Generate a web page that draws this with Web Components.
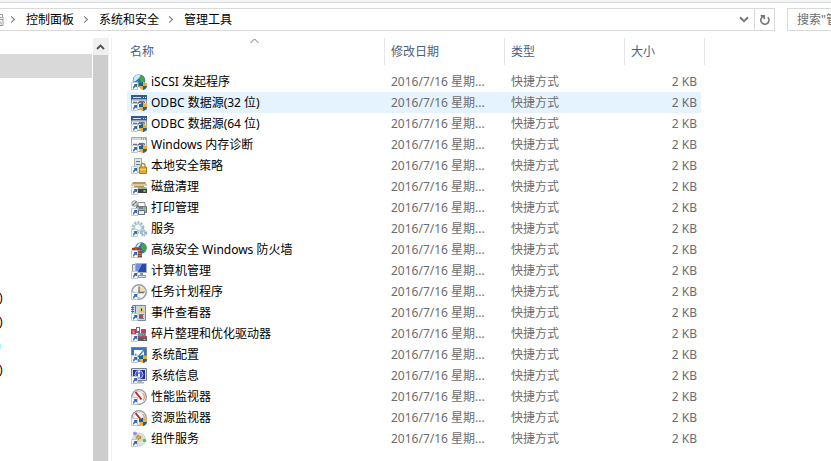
<!DOCTYPE html>
<html lang="zh-CN">
<head>
<meta charset="utf-8">
<title>管理工具</title>
<style>
  body {
    margin: 0;
    background: #fff;
    color: #000;
    font: 12px/20px "Noto Sans", "Noto Sans CJK SC", sans-serif;
  }
</style>
</head>
<body>
<explorer-window>
  <address-bar slot="toolbar">
    <a href="#panel">控制面板</a>
    <a href="#security">系统和安全</a>
    <a href="#tools">管理工具</a>
  </address-bar>
  <search-box slot="toolbar" label="搜索&quot;管理工具&quot;"></search-box>
  <nav-pane slot="nav"></nav-pane>
  <file-list></file-list>
</explorer-window>

<script>
class ExplorerWindow extends HTMLElement {
  constructor() {
    super();
    this.attachShadow({ mode: "open" });
    this.shadowRoot.innerHTML = `
    <style>
        :host {
            display: flex;
            flex-direction: column;
            height: 100vh;
            overflow: hidden;
        }
        #ribbon {
            flex: none;
            height: 2px;
            background: #f5f6f7;
            border-bottom: 1px solid #dadbdc;
        }
        header {
            flex: none;
            display: flex;
            gap: 12px;
            padding: 5px 0 7px;
        }
        main {
            flex: 1;
            display: flex;
            min-height: 0;
        }
    </style>
    <div id="ribbon"></div>
    <header><slot name="toolbar"></slot></header>
    <main>
        <slot name="nav"></slot>
        <slot></slot>
    </main>
    `;
  }
}

class AddressBar extends HTMLElement {
  constructor() {
    super();
    this.attachShadow({ mode: "open" });
    this.shadowRoot.innerHTML = `
    <style>
        :host {
            flex: 1;
            display: flex;
            align-items: center;
            box-sizing: border-box;
            height: 23px;
            border: 1px solid #d9d9d9;
            border-left: 0;
        }
        nav {
            flex: 1;
            display: flex;
            align-items: center;
            gap: 3px;
        }
        svg { display: block; flex: none; }
        ::slotted(a) {
            display: flex;
            align-items: center;
            color: #000;
            text-decoration: none;
        }
        ::slotted(a)::before {
            content: "";
            box-sizing: border-box;
            width: 5px;
            height: 5px;
            margin: 0 12px 0 5px;
            border: solid #777;
            border-width: 1px 1px 0 0;
            transform: rotate(45deg);
        }
        button {
            display: grid;
            place-items: center;
            width: 20px;
            height: 21px;
            padding: 0;
            border: 0;
            background: none;
        }
        #refresh { border-left: 1px solid #d9d9d9; }
    </style>
    <svg width="4" height="14" viewBox="0 0 4 14" fill="none" stroke="#999">
        <path d="M0 1.500H2.500V4M0 4.500H2M0 6.500H3M3 4V12.500H0M1 8.500v3"/>
    </svg>
    <nav><slot></slot></nav>
    <button aria-label="展开">
        <svg width="10" height="7" viewBox="0 0 10 7"><path d="M1 1.200l4 4 4-4" fill="none" stroke="#777" stroke-width="2"/></svg>
    </button>
    <button id="refresh" aria-label="刷新">
        <svg width="12" height="12" viewBox="0 0 12 12">
            <path d="M8.800 3.200a4.100 4.100 0 1 1-4.400-.9M1.600 1.700h3.600v3.600" fill="none" stroke="#777" stroke-width="1.600"/>
        </svg>
    </button>
    `;
  }
}

class SearchBox extends HTMLElement {
  constructor() {
    super();
    this.attachShadow({ mode: "open" });
    this.shadowRoot.innerHTML = `
    <style>
        :host { flex: 0 0 44px; }
        input {
            box-sizing: border-box;
            display: block;
            width: 100%;
            height: 23px;
            margin: 0;
            padding: 0 0 0 9px;
            border: 1px solid #d9d9d9;
            border-right: 0;
            background: #fff;
            font: inherit;
        }
        input::placeholder { color: #6d6d6d; }
    </style>
    <input type="text">
    `;
  }

  connectedCallback() {
    const input = this.shadowRoot.querySelector("input");
    input.placeholder = this.getAttribute("label");
    input.setAttribute("aria-label", this.getAttribute("label"));
  }
}

class NavPane extends HTMLElement {
  constructor() {
    super();
    this.attachShadow({ mode: "open" });
    this.shadowRoot.innerHTML = `
    <style>
        :host {
            flex: none;
            display: flex;
            gap: 1px;
            width: 111px;
            border-right: 1px solid #f0f0f0;
        }
        #tree {
            width: 92px;
            padding-top: 16px;
            overflow: hidden;
        }
        #current {
            display: block;
            height: 24px;
            margin-bottom: 208px;
            background: #d9d9d9;
        }
        #drives {
            display: grid;
            grid-auto-rows: 24px;
            align-items: center;
            margin-left: -1px;
        }
        #drives a {
            color: #000;
            text-decoration: none;
        }
        #drives i {
            width: 2px;
            height: 5px;
            background: #a8f4ff;
        }
        #scroll {
            display: flex;
            flex-direction: column;
            width: 15px;
            border-right: 1px solid #f0f0f0;
            background: #f0f0f0;
        }
        #scroll button {
            height: 17px;
            padding: 0;
            border: 0;
            background: #f0f0f0;
        }
        #scroll svg { display: block; margin: auto; }
        #thumb { flex: 1; background: #cdcdcd; }
    </style>
    <div id="tree">
        <a id="current" href="#current" aria-label="当前文件夹"></a>
        <div id="drives">
            <a href="#c">)</a>
            <a href="#d">)</a>
            <i></i>
            <a href="#e">)</a>
        </div>
    </div>
    <div id="scroll">
        <button aria-label="向上滚动">
            <svg width="9" height="6" viewBox="0 0 9 6"><path d="M1 5l3.500-3.500L8 5" fill="none" stroke="#505050" stroke-width="1.800"/></svg>
        </button>
        <div id="thumb"></div>
    </div>
    `;
  }
}

const SHIELD = `
  <path d="M12 7.500q2 1.500 4 1.500v3q-.5 3-4 4-3.500-1-4-4V9q2 0 4-1.500z" fill="#f3ac2c"/>
  <path d="M12 7.500V12H8V9q2 0 4-1.500zM12 12h4q-.5 3-4 4z" fill="#1b5f9f"/>`;

const GLOBE = `
  <circle cx="8" cy="6.500" r="6.300" fill="#2873c4"/>
  <path d="M3 3q3-3.500 7-2.500L9 3 7 5 4.500 7 2 8z" fill="#cfeaf2"/>
  <path d="M9 1.500l3 1 2 3-1 4-2-1-2.500-3z" fill="#45a83b"/>
  <path d="M3 8l4-1 2 4-2 1.500z" fill="#58b550"/>`;

const WINDOW = `
  <path d="M.5.500h15v14H.5z" fill="#f4f6f8" stroke="#8d99a4"/>
  <path d="M0 0h16v4.500H0z" fill="#345a8a"/>
  <path d="M2 2.500h8M12 2.500h1M14 2.500h1" stroke="#d7e3ef"/>
  <path d="M1 5.500h14" stroke="#c3ccd4"/>`;

const TOOLS = `
  <path d="M2 7.500h4M9 7.500q2-2 5 0M6 9l3-2.500 4 3" fill="none" stroke="#68737d" stroke-width="1.600"/>`;

const GAUGE = `
  <circle cx="8" cy="8" r="7.300" fill="#fbfbfb" stroke="#8f9699" stroke-width="1.300"/>
  <path d="M3 9a5 5 0 0 1 8-5.500" fill="none" stroke="#c7cdd1"/>
  <path d="M11.500 4a5.300 5.300 0 0 1 .5 7.500" fill="none" stroke="#e9a184" stroke-width="1.500"/>
  <path d="M4.500 3l6 7.500" stroke="#c52722" stroke-width="2"/>`;

const SERVER = `
  <path d="M3.500.500h7v14h-7z" fill="#dfe4e7" stroke="#a2abb1"/>
  <path d="M5 3.500h4M5 6.500h4" stroke="#637784"/>`;

const ICONS = {
  iscsi: GLOBE + SHIELD,
  odbc: WINDOW + TOOLS + SHIELD,
  memory: `
    <path d="M.5.500h15v14H.5z" fill="#fafafa" stroke="#a4aaaf"/>
    <path d="M1 2h14" stroke="#d3d7da" stroke-width="2"/>
    <path d="M10 2h1M12 2h1M14 2h1" stroke="#727a81"/>` + TOOLS + SHIELD,
  policy: SERVER + `
    <path d="M10 9V7.500a2 2 0 0 1 4 0V9" fill="none" stroke="#a98b35" stroke-width="1.300"/>
    <path d="M8.500 9h7v6.500h-7z" fill="#e6ad2d" stroke="#b07e18"/>
    <path d="M9 11.500h6" stroke="#fbd46c"/>`,
  disk: `
    <path d="M2 3h12l2 3H0z" fill="#b49b5d"/>
    <path d="M0 5h16v2H0z" fill="#dccb98"/>
    <path d="M3 7.500h10" stroke="#a8935a"/>
    <path d="M6 9l1-1h8l1 1v1H6z" fill="#a4a8a9"/>
    <path d="M6 10h10v4H6z" fill="#3b4041"/>
    <path d="M12.500 12h2" stroke="#67e03f" stroke-width="2"/>`,
  print: `
    <path d="M7 2.500h7v5H7z" fill="#fafafa" stroke="#8a8f92"/>
    <path d="M5.500 6.500h10v6h-10z" fill="#a9afb3" stroke="#6d757a"/>
    <path d="M7.500 10.500h6v4h-6z" fill="#e6f0f5" stroke="#687278"/>
    <path d="M8 8h4" stroke="#555d61"/>
    <path d="M13 8h2" stroke="#53c653"/>
    <circle cx="3.500" cy="3.500" r="2.700" fill="#eee" stroke="#888e91"/>
    <path d="M1.500 5.500l4-4M6 5l3 3" stroke="#777e82" stroke-width="1.300"/>`,
  services: `
    <circle cx="7" cy="6.500" r="5" fill="#edf4f8" stroke="#9dbcce" stroke-width="2.500" stroke-dasharray="2 1.200"/>
    <circle cx="7" cy="6.500" r="3.500" fill="#fff" stroke="#b8ceda" stroke-width="1.500"/>
    <circle cx="12.500" cy="12" r="2.500" fill="#e8f1f7" stroke="#8aafc5" stroke-width="2" stroke-dasharray="1.500 .8"/>
    <circle cx="12.500" cy="12" r="1.300" fill="#fff" stroke="#9bbacb"/>`,
  firewall: `
    <circle cx="10" cy="6" r="5.800" fill="#2873c4"/>
    <path d="M6 3q2-2.500 4-2.500L9 3 7 5.500H5z" fill="#d4edf3"/>
    <path d="M11 1l3 1.500 1.500 3-1 4-2.500-1-2-3z" fill="#45a83b"/>
    <path d="M1 6l4-1 6 2v8.500H5L1 13z" fill="#94402f"/>
    <path d="M1 8.500h10M1 11.500h10M5 13.500h6M5 5v3.500M8 8.500v3" stroke="#c78870" stroke-width=".7"/>`,
  computer: `
    <path d="M1.500 1.500h3v9h-3z" fill="#dfe4e7" stroke="#89939a"/>
    <path d="M4.500.500h11v9h-11z" fill="#2749ad" stroke="#aab2b9"/>
    <path d="M5 1h6L7 9H5z" fill="#6f91e2"/>
    <path d="M9 10h3v2H9z" fill="#8b959c"/>
    <path d="M7.500 12.500h7v2h-7z" fill="#dbe0e4" stroke="#8e989f"/>`,
  tasks: `
    <circle cx="8" cy="8" r="7.200" fill="#f3f5f6" stroke="#949ca2" stroke-width="1.400"/>
    <path d="M8 8V2a6 6 0 0 1 6 6z" fill="#f4d9a0"/>
    <path d="M8 2.500V8.500h5" fill="none" stroke="#65717a" stroke-width="1.300"/>
    <path d="M14 8h-1M8 14v-1M2 8h1" stroke="#6d91aa"/>`,
  events: `
    <path d="M1.500.500h13v15h-13z" fill="#cbd8e6" stroke="#718ba4"/>
    <path d="M4.500 1v13" stroke="#597b9f"/>
    <path d="M0 2.500h3M0 4.500h3M0 6.500h3M0 8.500h3" stroke="#5c656d"/>
    <path d="M10.500 1.500l3.500 6H7z" fill="#e9c442"/>
    <path d="M10.500 3.500V6" stroke="#493b11"/>
    <path d="M8 9.500h5M8 13.500h5" stroke="#6c86a1"/>
    <path d="M8 10h4v3H8z" fill="#bf4540"/>`,
  defrag: `
    <path d="M0 3h5v6H0z" fill="#cf3435"/><path d="M1.500 4.500h2v3h-2z" fill="#eb8f83"/>
    <path d="M5 1h4v6H5z" fill="#9b4f92"/><path d="M6 2h2v3H6z" fill="#fff"/>
    <path d="M10 3h5v4h-5z" fill="#ba407c"/><path d="M7 7h4v3H7z" fill="#3bb5aa"/>
    <path d="M11 7h4v4h-4z" fill="#55a846"/>
    <path d="M6 10h10v2H6z" fill="#bc4264"/>
    <path d="M6 12h10v3H6z" fill="#555b5b"/>
    <path d="M12.500 13.500h2" stroke="#8ae460"/>`,
  config: `
    <path d="M.5.500h15v14H.5z" fill="#fff" stroke="#777f88"/>
    <path d="M2 2h12v11H2z" fill="#fff" stroke="#3775ca" stroke-width="2"/>
    <path d="M4 7l3 3L13 3" fill="none" stroke="#477dc6" stroke-width="1.300"/>` + SHIELD,
  info: `
    <path d="M.5.500h15v12H.5z" fill="#d8dce0" stroke="#777f87"/>
    <path d="M2 2h12v9H2z" fill="#202c9f"/>
    <circle cx="8" cy="6.500" r="4" fill="#4357cb" stroke="#b7c2f5"/>
    <path d="M8 3v1.500M8 5.500v4" stroke="#fff" stroke-width="1.800"/>
    <path d="M7 13h4v1h2v1.500H5z" fill="#aab0b5"/>`,
  perf: GAUGE,
  resource: GAUGE + SHIELD,
  component: `
    <circle cx="8" cy="8.500" r="6.500" fill="#dce1e4" stroke="#ccd2d5"/>
    <path d="M4 5l4-2 4 3v3l-4 2-4-2z" fill="#d7d3b8"/>
    <circle cx="7.500" cy="6.500" r="2" fill="#dfad2d" stroke="#87753a" stroke-dasharray="1.500 1"/>
    <circle cx="4" cy="2.500" r="2" fill="#9a93e4"/>
    <circle cx="13.500" cy="9.500" r="1.700" fill="#63ba4d"/>`
};

class FileIcon extends HTMLElement {
  constructor() {
    super();
    this.attachShadow({ mode: "open" });
  }

  // every item is a shortcut, so the arrow goes over all of them
  connectedCallback() {
    this.shadowRoot.innerHTML = `
    <style>
        :host { display: block; flex: none; }
        svg { display: block; }
    </style>
    <svg width="16" height="16" viewBox="0 0 16 16" aria-hidden="true">
        ${ICONS[this.getAttribute("name")]}
        <path d="M.5 8.500h6v7h-6z" fill="#fff" stroke="#c3c9ce"/>
        <path d="M2.500 10H6v3.500L4.900 12.400Q3.200 13.200 2.800 15 1 13.200 3.600 11.100z" fill="#2e68ae"/>
    </svg>
    `;
  }
}

const FILES = [
  ["iscsi", "iSCSI 发起程序"],
  ["odbc", "ODBC 数据源(32 位)"],
  ["odbc", "ODBC 数据源(64 位)"],
  ["memory", "Windows 内存诊断"],
  ["policy", "本地安全策略"],
  ["disk", "磁盘清理"],
  ["print", "打印管理"],
  ["services", "服务"],
  ["firewall", "高级安全 Windows 防火墙"],
  ["computer", "计算机管理"],
  ["tasks", "任务计划程序"],
  ["events", "事件查看器"],
  ["defrag", "碎片整理和优化驱动器"],
  ["config", "系统配置"],
  ["info", "系统信息"],
  ["perf", "性能监视器"],
  ["resource", "资源监视器"],
  ["component", "组件服务"]
];

class FileList extends HTMLElement {
  constructor() {
    super();
    this.attachShadow({ mode: "open" });
    this.shadowRoot.innerHTML = `
    <style>
        :host {
            flex: 1;
            min-width: 0;
            padding-left: 15px;
        }
        table {
            width: 578px;
            table-layout: fixed;
            border-collapse: separate;
            border-spacing: 0;
        }
        .name { width: 258px; }
        .date, .type { width: 120px; }
        .size { width: 80px; }
        th {
            padding: 0 0 6px;
            font-weight: normal;
        }
        th button {
            position: relative;
            display: block;
            box-sizing: border-box;
            width: 100%;
            height: 27px;
            padding: 0 6px;
            border: 0;
            border-right: 1px solid #e5e5e5;
            background: none;
            color: #4c607a;
            font: inherit;
            text-align: left;
        }
        th.name button { padding-left: 3px; }
        th svg {
            position: absolute;
            top: 0;
            left: calc(50% - 6px);
        }
        td {
            height: 21px;
            padding: 0 6px;
            color: #6d6d6d;
            line-height: 20px;
            white-space: nowrap;
        }
        td:first-child { padding: 0 4px; color: #000; }
        td:last-child {
            padding: 0 4px;
            border-right: 4px solid transparent;
            background-clip: padding-box;
            text-align: right;
        }
        td div {
            display: flex;
            align-items: center;
            gap: 4px;
        }
        tr.hover td { background-color: #e5f3ff; }
    </style>
    <table>
        <thead>
            <tr>
                <th class="name"><button>名称<svg width="9" height="6" viewBox="0 0 9 6"><path d="M.5 5l4-4 4 4" fill="none" stroke="#777"/></svg></button></th>
                <th class="date"><button>修改日期</button></th>
                <th class="type"><button>类型</button></th>
                <th class="size"><button>大小</button></th>
            </tr>
        </thead>
        <tbody></tbody>
    </table>
    `;
  }

  connectedCallback() {
    this.shadowRoot.querySelector("tbody").innerHTML = FILES.map(([icon, name], i) => `
      <tr${i === 1 ? ' class="hover"' : ""}>
        <td><div><file-icon name="${icon}"></file-icon><span>${name}</span></div></td>
        <td>2016/7/16 星期...</td>
        <td>快捷方式</td>
        <td>2 KB</td>
      </tr>`).join("");
  }
}

customElements.define("explorer-window", ExplorerWindow);
customElements.define("address-bar", AddressBar);
customElements.define("search-box", SearchBox);
customElements.define("nav-pane", NavPane);
customElements.define("file-icon", FileIcon);
customElements.define("file-list", FileList);
</script>
</body>
</html>
